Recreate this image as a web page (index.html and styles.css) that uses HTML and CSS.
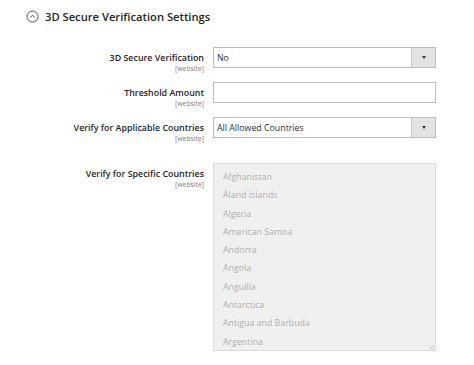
FILE: index.html
```html
<!DOCTYPE html>
<html lang="en">
<head>
    <meta charset="UTF-8">
    <title>3D Secure Verification Settings</title>
    <link rel="stylesheet" href="styles.css">
</head>
<body>
    <div class="section-title">
        <svg class="toggle-icon" width="13" height="13" viewBox="0 0 13 13">
            <circle cx="6.5" cy="6.5" r="5.5" fill="none" stroke="#555" stroke-width="1"/>
            <path d="M4.2 7.5 L6.5 5.2 L8.8 7.5" fill="none" stroke="#444" stroke-width="1"/>
        </svg>
        <span>3D Secure Verification Settings</span>
    </div>

    <div class="config-form">
        <div class="row">
            <div class="label">
                <span class="label-text">3D Secure Verification</span>
                <span class="scope">[website]</span>
            </div>
            <div class="control select">
                <span class="select-value">No</span>
                <span class="select-btn"><span class="arrow"></span></span>
            </div>
        </div>

        <div class="row">
            <div class="label">
                <span class="label-text">Threshold Amount</span>
                <span class="scope">[website]</span>
            </div>
            <div class="control text-input"></div>
        </div>

        <div class="row">
            <div class="label">
                <span class="label-text">Verify for Applicable Countries</span>
                <span class="scope">[website]</span>
            </div>
            <div class="control select">
                <span class="select-value">All Allowed Countries</span>
                <span class="select-btn"><span class="arrow"></span></span>
            </div>
        </div>

        <div class="row row-multi">
            <div class="label">
                <span class="label-text">Verify for Specific Countries</span>
                <span class="scope">[website]</span>
            </div>
            <div class="control multiselect">
                <div class="option">Afghanistan</div>
                <div class="option">Åland Islands</div>
                <div class="option">Algeria</div>
                <div class="option">American Samoa</div>
                <div class="option">Andorra</div>
                <div class="option">Angola</div>
                <div class="option">Anguilla</div>
                <div class="option">Antarctica</div>
                <div class="option">Antigua and Barbuda</div>
                <div class="option">Argentina</div>
                <span class="resize"></span>
            </div>
        </div>
    </div>
</body>
</html>
```

FILE: styles.css
```css
body {
    font-family: 'Open Sans', 'Noto Sans', sans-serif;
    margin: 0;
    padding: 0;
    background-color: #fff;
    color: #303030;
}
.section-title {
    display: flex;
    align-items: center;
    gap: 6px;
    height: 15px;
    padding: 9px 0 0 26px;
    font-size: 11.2px;
    font-weight: 600;
    color: #262626;
}
.toggle-icon {
    display: block;
}
.config-form {
    display: flex;
    flex-direction: column;
    gap: 14px;
    margin-top: 23px;
}
.row {
    display: grid;
    grid-template-columns: 204px 223px;
    grid-template-rows: 21px;
    column-gap: 9px;
}
.row-multi {
    grid-template-rows: 188px;
    margin-top: 11px;
}
.label {
    display: flex;
    flex-direction: column;
    align-items: flex-end;
    padding-top: 5px;
}
.label-text {
    font-size: 8.9px;
    font-weight: 600;
    line-height: 12px;
    color: #262626;
}
.scope {
    font-size: 6.8px;
    line-height: 9px;
    color: #808080;
}
.control {
    box-sizing: border-box;
    border: 1px solid #bdbdbd;
    background: #fff;
    height: 21px;
}
.select {
    display: flex;
    align-items: center;
}
.select-value {
    flex: 1;
    padding-left: 3px;
    font-size: 8.8px;
}
.select-btn {
    width: 23px;
    height: 100%;
    background: #e3e3e3;
    border-left: 1px solid #c8c8c8;
    display: flex;
    align-items: center;
    justify-content: center;
}
.arrow {
    width: 0;
    height: 0;
    border-left: 2.5px solid transparent;
    border-right: 2.5px solid transparent;
    border-top: 3px solid #41362f;
}
.multiselect {
    position: relative;
    height: 188px;
    background: #f0f0f0;
    border-color: #dadada;
    padding: 4px 0 0 9px;
}
.option {
    font-size: 8.8px;
    line-height: 18.3px;
    color: #b0b0b0;
}
.resize {
    position: absolute;
    right: 1px;
    bottom: 1px;
    width: 5px;
    height: 5px;
    background: linear-gradient(135deg, transparent 55%, #bbb 55%, #bbb 65%, transparent 65%, transparent 80%, #bbb 80%);
}
```
